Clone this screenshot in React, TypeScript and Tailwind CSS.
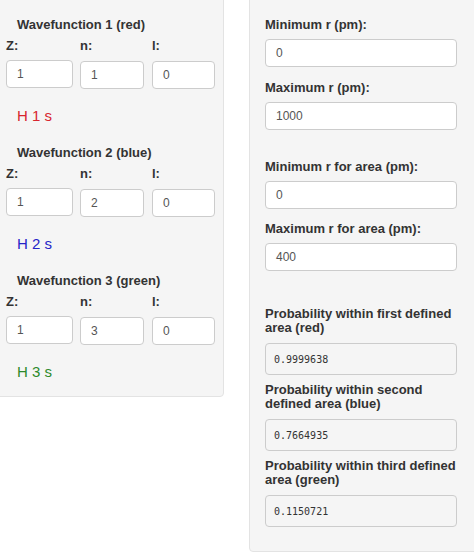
import React from 'react';

const waves = [
    { title: 'Wavefunction 1 (red)', z: '1', n: '1', l: '0', label: 'H 1 s', color: 'text-[#d8262f]' },
    { title: 'Wavefunction 2 (blue)', z: '1', n: '2', l: '0', label: 'H 2 s', color: 'text-[#2424c8]' },
    { title: 'Wavefunction 3 (green)', z: '1', n: '3', l: '0', label: 'H 3 s', color: 'text-[#2c8a2c]' },
];

const probs = [
    { label: 'Probability within first defined area (red)', value: '0.9999638' },
    { label: 'Probability within second defined area (blue)', value: '0.7664935' },
    { label: 'Probability within third defined area (green)', value: '0.1150721' },
];

function Field({ value, className = '' }: { value: string; className?: string }) {
    return (
        <div className={`h-[28px] bg-white border border-[#cccccc] rounded-[4px] flex items-center px-[10px] text-[12px] text-[#555555] ${className}`}>
            {value}
        </div>
    );
}

function Label({ text, className = '' }: { text: string; className?: string }) {
    return <div className={`h-[20px] leading-[20px] text-[13px] font-bold text-[#333333] ${className}`}>{text}</div>;
}

export default function App() {
    return (
        <div className="w-[474px] h-[552px] overflow-hidden bg-white flex items-start" style={{ fontFamily: '"Liberation Sans", Arial, sans-serif' }}>
            {/* Panel izquierdo */}
            <div className="ml-[-10px] mt-[-4px] w-[234px] shrink-0 bg-[#f5f5f5] border border-[#e3e3e3] rounded-[4px] pl-[15px] pt-[18px] pb-[14px]">
                {waves.map((w, i) => (
                    <div key={w.title} className={i > 0 ? 'mt-[17px]' : ''}>
                        <Label text={w.title} className="pl-[11px]" />
                        <div className="grid grid-cols-[67px_64px_64px] gap-x-[7px] mt-[1px]">
                            <Label text="Z:" />
                            <Label text="n:" />
                            <Label text="l:" className="pl-[1px]" />
                            <Field value={w.z} className="mt-[4px]" />
                            <Field value={w.n} className="mt-[5px]" />
                            <Field value={w.l} className="mt-[5px] ml-[1px]" />
                        </div>
                        <div className={`mt-[17px] pl-[11px] h-[20px] leading-[20px] text-[15px] ${w.color}`}>{w.label}</div>
                    </div>
                ))}
            </div>

            {/* Panel derecho */}
            <div className="ml-[25px] mt-[-4px] w-[240px] shrink-0 h-[556px] bg-[#f5f5f5] border border-[#e3e3e3] rounded-[4px] pl-[15px] pt-[18px]">
                <div className="w-[192px]">
                    <Label text="Minimum r (pm):" />
                    <Field value="0" className="mt-[4px]" />
                    <Label text="Maximum r (pm):" className="mt-[11px]" />
                    <Field value="1000" className="mt-[4px]" />
                    <Label text="Minimum r for area (pm):" className="mt-[27px]" />
                    <Field value="0" className="mt-[4px]" />
                    <Label text="Maximum r for area (pm):" className="mt-[10px]" />
                    <Field value="400" className="mt-[4px]" />

                    <div className="mt-[36px]">
                        {probs.map((p, i) => (
                            <div key={p.label} className={i > 0 ? 'mt-[8px]' : ''}>
                                <div className="text-[13px] leading-[14px] font-bold text-[#333333]">{p.label}</div>
                                <div
                                    className="mt-[8px] h-[32px] bg-[#f5f5f5] border border-[#cccccc] rounded-[4px] flex items-center px-[8px] text-[10px] text-[#333333]"
                                    style={{ fontFamily: '"DejaVu Sans Mono", "Liberation Mono", monospace' }}
                                >
                                    {p.value}
                                </div>
                            </div>
                        ))}
                    </div>
                </div>
            </div>
        </div>
    );
}
